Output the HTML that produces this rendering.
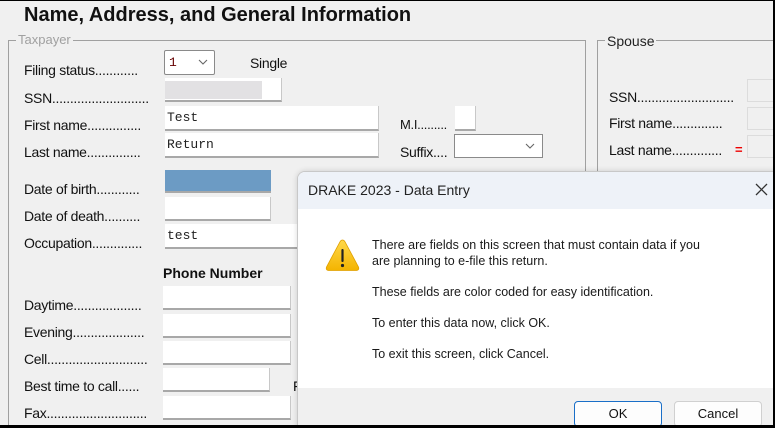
<!DOCTYPE html>
<html><head><meta charset="utf-8">
<style>
*{margin:0;padding:0;box-sizing:border-box}
body{width:775px;height:428px;overflow:hidden;background:#000;position:relative;font-family:"Liberation Sans",Arial,sans-serif}
#app{position:absolute;left:0;top:1px;width:773px;height:424px;background:#f0f0f0;overflow:hidden}
.a{position:absolute;white-space:nowrap}
.lbl{font-size:14px;color:#111;letter-spacing:-0.3px}
.f{position:absolute;background:#fff;border-right:1px solid #c8c8c8;border-bottom:2px solid #a8a8a8}
.mono{font-family:"Liberation Mono",monospace;font-size:13px;color:#222;padding:4px 0 0 2px}
.grp{position:absolute;border:1px solid #a0a0a0}
.dlg{position:absolute;left:297px;top:170px;width:490px;height:270px;background:#fff;border:1px solid #c8c8c8;border-radius:8px 0 0 0;box-shadow:0 0 6px rgba(0,0,0,.15);overflow:hidden}
.dt{font-size:12.5px;color:#1a1a1a;position:absolute;left:74px;white-space:nowrap}
.btn{position:absolute;top:229px;width:88px;height:26px;border:1px solid #d0d0d0;border-radius:4px;background:#fdfdfd;font-size:13px;text-align:center;line-height:24px;color:#111}
</style></head><body>
<div id="app">
<div class="a" style="left:24px;top:3px;font-size:20px;font-weight:bold;color:#111">Name, Address, and General Information</div>

<div class="grp" style="left:8px;top:39px;width:578px;height:400px"></div>
<div class="a" style="left:16px;top:31px;font-size:13px;color:#a0a0a0;background:#f0f0f0;padding:0 2px">Taxpayer</div>
<div class="grp" style="left:597px;top:39px;width:200px;height:400px"></div>
<div class="a" style="left:605px;top:32px;font-size:14px;color:#222;background:#f0f0f0;padding:0 2px">Spouse</div>

<div class="a lbl" style="left:24px;top:61px">Filing status............</div>
<div class="a lbl" style="left:24px;top:89px">SSN...........................</div>
<div class="a lbl" style="left:24px;top:116px">First name...............</div>
<div class="a lbl" style="left:24px;top:143px">Last name...............</div>
<div class="a lbl" style="left:24px;top:180px">Date of birth............</div>
<div class="a lbl" style="left:24px;top:207px">Date of death..........</div>
<div class="a lbl" style="left:24px;top:234px">Occupation..............</div>
<div class="a lbl" style="left:24px;top:296px">Daytime...................</div>
<div class="a lbl" style="left:24px;top:323px">Evening....................</div>
<div class="a lbl" style="left:24px;top:350px">Cell............................</div>
<div class="a lbl" style="left:24px;top:377px">Best time to call......</div>
<div class="a lbl" style="left:24px;top:404px">Fax............................</div>

<div class="a" style="left:164px;top:49px;width:51px;height:25px;border:1px solid #8a8a8a;background:#fff;border-radius:2px"></div>
<div class="a mono" style="left:167px;top:50px;color:#600">1</div>
<svg class="a" style="left:198px;top:58px" width="10" height="6" viewBox="0 0 10 6"><path d="M1 1L5 5L9 1" fill="none" stroke="#666" stroke-width="1.1"/></svg>
<div class="a lbl" style="left:250px;top:54px">Single</div>

<div class="f" style="left:165px;top:77px;width:117px;height:24px"></div>
<div class="a" style="left:165px;top:80px;width:97px;height:18px;background:#e2e1e3"></div>
<div class="f mono" style="left:165px;top:105px;width:214px;height:25px">Test</div>
<div class="f mono" style="left:165px;top:132px;width:214px;height:25px">Return</div>
<div class="a" style="left:165px;top:169px;width:106px;height:23px;background:#6c9bc4;border-bottom:2px solid #a8a8a8"></div>
<div class="f" style="left:165px;top:196px;width:106px;height:24px"></div>
<div class="f mono" style="left:165px;top:223px;width:160px;height:25px">test</div>

<div class="a" style="left:163px;top:264px;font-size:14px;font-weight:bold;color:#111">Phone Number</div>
<div class="f" style="left:163px;top:285px;width:128px;height:24px"></div>
<div class="f" style="left:163px;top:313px;width:128px;height:24px"></div>
<div class="f" style="left:163px;top:340px;width:128px;height:24px"></div>
<div class="f" style="left:163px;top:367px;width:107px;height:24px"></div>
<div class="f" style="left:163px;top:395px;width:128px;height:24px"></div>
<div class="a lbl" style="left:293px;top:377px">F</div>

<div class="a lbl" style="left:400px;top:116px;font-size:13px">M.I.........</div>
<div class="f" style="left:455px;top:105px;width:21px;height:25px"></div>
<div class="a lbl" style="left:400px;top:143px">Suffix....</div>
<div class="a" style="left:454px;top:133px;width:89px;height:24px;border:1px solid #8a8a8a;background:#fff"></div>
<svg class="a" style="left:525px;top:142px" width="10" height="6" viewBox="0 0 10 6"><path d="M1 1L5 5L9 1" fill="none" stroke="#666" stroke-width="1.1"/></svg>

<div class="a lbl" style="left:609px;top:88px">SSN...........................</div>
<div class="a lbl" style="left:609px;top:114px">First name..............</div>
<div class="a lbl" style="left:609px;top:141px">Last name..............</div>
<div class="a" style="left:735px;top:141px;font-size:13px;color:#e00;font-weight:bold">=</div>
<div class="a" style="left:747px;top:78px;width:40px;height:23px;border:1px solid #dcdcdc"></div>
<div class="a" style="left:747px;top:106px;width:40px;height:23px;border:1px solid #dcdcdc"></div>
<div class="a" style="left:747px;top:134px;width:40px;height:23px;border:1px solid #dcdcdc"></div>

<div class="dlg">
 <div style="position:absolute;left:0;top:0;width:100%;height:37px;background:#eef2f8"></div>
 <div class="a" style="left:10px;top:10px;font-size:14px;color:#222">DRAKE 2023 - Data Entry</div>
 <svg class="a" style="left:457px;top:11px" width="13" height="13" viewBox="0 0 13 13"><path d="M1 1L12 12M12 1L1 12" stroke="#333" stroke-width="1.3"/></svg>
 <svg class="a" style="left:27px;top:66px" width="35" height="35" viewBox="0 0 35 35">
  <defs><linearGradient id="g" x1="0" y1="0" x2="0" y2="1"><stop offset="0" stop-color="#ffd84a"/><stop offset="1" stop-color="#f4b400"/></linearGradient></defs>
  <path d="M17.5 2 Q19 2 20 3.8 L33.5 29 Q34.5 32 31.5 32.5 L3.5 32.5 Q0.5 32 1.5 29 L15 3.8 Q16 2 17.5 2Z" fill="url(#g)" stroke="#e0a000" stroke-width="0.8"/>
  <rect x="16.4" y="11" width="2.2" height="13" rx="1" fill="#222"/>
  <circle cx="17.5" cy="27.5" r="1.6" fill="#222"/>
 </svg>
 <div class="dt" style="top:66px">There are fields on this screen that must contain data if you</div>
 <div class="dt" style="top:82px">are planning to e-file this return.</div>
 <div class="dt" style="top:113px">These fields are color coded for easy identification.</div>
 <div class="dt" style="top:144px">To enter this data now, click OK.</div>
 <div class="dt" style="top:175px">To exit this screen, click Cancel.</div>
 <div style="position:absolute;left:0;top:216px;width:100%;height:60px;background:#f0f0f0"></div>
 <div class="btn" style="left:276px;border:1px solid #1a6fc8">OK</div>
 <div class="btn" style="left:376px">Cancel</div>
</div>
</div>
</body></html>
